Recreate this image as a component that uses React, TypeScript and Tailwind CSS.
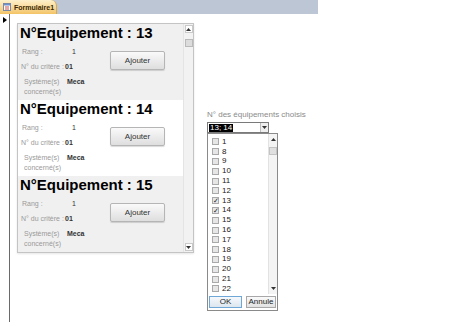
import React from 'react';

const records = [
  { id: 13, bg: 'bg-[#f0f0f0]' },
  { id: 14, bg: 'bg-white' },
  { id: 15, bg: 'bg-[#f0f0f0]' },
];

const items = [1, 8, 9, 10, 11, 12, 13, 14, 15, 16, 17, 18, 19, 20, 21, 22];
const checked = [13, 14];

const Arrow = ({ dir }: { dir: 'up' | 'down' }) => (
  <svg width="5" height="3" viewBox="0 0 5 3">
    <path d={dir === 'up' ? 'M0 3 L2.5 0 L5 3 Z' : 'M0 0 L2.5 3 L5 0 Z'} fill="#333" />
  </svg>
);

const Record = ({ id, bg }: { id: number; bg: string }) => (
  <div className={`h-[76px] ${bg}`}>
    <div className="pl-[2px] text-[15px] font-bold leading-[17px] text-black">N°Equipement : {id}</div>
    <div className="mt-[6px] flex">
      <div className="w-[92px] text-[7px] leading-[10px]">
        <div className="flex h-[10px] pl-[4px]">
          <span className="w-[50px] text-[#9a9a9a]">Rang :</span>
          <span className="text-[#333]">1</span>
        </div>
        <div className="mt-[5px] flex h-[10px] pl-[3px]">
          <span className="w-[44px] text-[#9a9a9a]">N° du critère :</span>
          <span className="font-bold text-[#333]">01</span>
        </div>
        <div className="mt-[5px] flex pl-[6px]">
          <span className="w-[43px] text-[#9a9a9a]">
            Système(s)
            <br />
            concerné(s)
          </span>
          <span className="font-bold text-[#333]">Meca</span>
        </div>
      </div>
      <button
        type="button"
        className="mt-[4px] h-[19px] w-[55px] rounded-[2px] border border-[#b5b5b5] bg-gradient-to-b from-[#fafafa] to-[#dedede] text-[8px] text-[#333] shadow-[0_1px_1px_rgba(0,0,0,0.15)]"
      >
        Ajouter
      </button>
    </div>
  </div>
);

export default function App() {
  return (
    <div className="h-[322px] w-[474px] overflow-hidden bg-white font-['Liberation_Sans',Arial,sans-serif]">
      {/* barre d'onglets */}
      <div className="flex h-[14px] w-[318px] bg-[#bcc6d4]">
        <div className="flex h-[14px] w-[57px] items-center gap-[3px] rounded-tr-[6px] border-r border-[#d9a94a] bg-gradient-to-b from-[#fdf1cc] to-[#f3c465] pl-[3px]">
          <svg width="8" height="8" viewBox="0 0 8 8">
            <rect x="0.5" y="0.5" width="7" height="7" fill="#fff" stroke="#7a8aa6" />
            <rect x="1" y="1" width="6" height="1.5" fill="#6d8fd0" />
            <rect x="2" y="3.5" width="4" height="1" fill="#d05050" />
            <rect x="2" y="5.5" width="4" height="1" fill="#d05050" />
          </svg>
          <span className="text-[7px] font-bold leading-none text-[#3a2a05]">Formulaire1</span>
        </div>
      </div>

      <div className="flex">
        {/* sélecteur d'enregistrement */}
        <div className="h-[308px] w-[10px] border-r border-[#6a6a6a] pl-[3px] pt-[3px]">
          <svg width="4" height="6" viewBox="0 0 4 6">
            <path d="M0 0 L4 3 L0 6 Z" fill="#000" />
          </svg>
        </div>

        {/* sous-formulaire */}
        <div className="ml-[7px] mt-[9px] flex h-[230px] w-[177px] border border-[#c4c4c4] bg-[#f0f0f0] shadow-[0_1px_2px_rgba(0,0,0,0.1)]">
          <div className="flex-1">
            {records.map((r) => (
              <Record key={r.id} id={r.id} bg={r.bg} />
            ))}
          </div>
          <div className="flex w-[10px] flex-col items-center border-l border-[#e4e4e4] bg-[#f2f2f2] py-[1px]">
            <div className="flex h-[8px] w-[8px] items-center justify-center border border-[#c9c9c9] bg-white">
              <Arrow dir="up" />
            </div>
            <div className="mt-[6px] h-[8px] w-[8px] border border-[#b9b9b9] bg-[#dcdcdc]" />
            <div className="flex-1" />
            <div className="flex h-[8px] w-[8px] items-center justify-center border border-[#c9c9c9] bg-white">
              <Arrow dir="down" />
            </div>
          </div>
        </div>

        {/* liste déroulante */}
        <div className="ml-[13px] mt-[96px] flex flex-col">
          <div className="h-[10px] text-[8px] leading-[10px] text-[#8a8a8a]">N° des équipements choisis</div>
          <div className="mt-[2px] flex h-[11px] w-[62px] items-center border border-[#7a7a7a] bg-white pl-[1px]">
            <span className="bg-black px-[1px] text-[8px] leading-[8px] text-white">13; 14</span>
            <div className="flex-1" />
            <div className="flex h-[9px] w-[8px] items-center justify-center border-l border-[#bcbcbc] bg-[#eeeeee]">
              <Arrow dir="down" />
            </div>
          </div>
          <div className="flex h-[178px] w-[71px] flex-col border border-[#8a8a8a] bg-white">
            <div className="flex h-[160px]">
              <div className="flex-1 pt-[3px]">
                {items.map((n) => (
                  <div key={n} className="flex h-[9.8px] items-center pl-[4px]">
                    <div className="flex h-[7px] w-[7px] items-center justify-center border border-[#a9a9a9] bg-[#e6e6e6] text-[7px] leading-none text-[#222]">
                      {checked.includes(n) ? '✓' : ''}
                    </div>
                    <span className="ml-[3px] text-[8px] leading-none text-[#222]">{n}</span>
                  </div>
                ))}
              </div>
              <div className="flex w-[9px] flex-col items-center border-l border-[#e2e2e2] bg-[#f4f4f4] py-[2px]">
                <div className="flex h-[7px] w-[8px] items-center justify-center">
                  <Arrow dir="up" />
                </div>
                <div className="mt-[4px] h-[8px] w-[8px] border border-[#c4c4c4] bg-[#e0e0e0]" />
                <div className="flex-1" />
                <div className="flex h-[7px] w-[8px] items-center justify-center">
                  <Arrow dir="down" />
                </div>
              </div>
            </div>
            <div className="mt-[2px] flex px-[1px]">
              <button
                type="button"
                className="h-[12px] w-[33px] border border-[#6fa7d6] bg-gradient-to-b from-[#f6f9fc] to-[#dce6ef] text-[8px] leading-none text-[#222]"
              >
                OK
              </button>
              <button
                type="button"
                className="ml-[4px] h-[12px] w-[30px] border border-[#a8a8a8] bg-gradient-to-b from-[#fafafa] to-[#e2e2e2] text-[8px] leading-none text-[#222]"
              >
                Annule
              </button>
            </div>
          </div>
        </div>
      </div>
    </div>
  );
}
